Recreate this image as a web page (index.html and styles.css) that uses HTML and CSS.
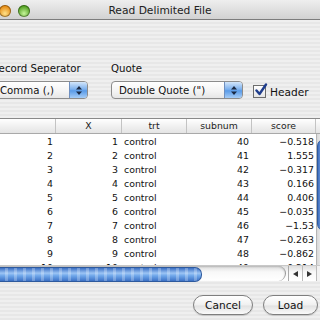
FILE: index.html
```html
<!DOCTYPE html>
<html lang="en">
<head>
    <meta charset="UTF-8">
    <title>Read Delimited File</title>
    <link rel="stylesheet" href="styles.css">
</head>
<body>
<div class="window">
    <div class="titlebar">
        <div class="lights">
            <span class="light close"></span>
            <span class="light minimize"></span>
            <span class="light zoom"></span>
        </div>
        <div class="title">Read Delimited File</div>
        <div></div>
    </div>

    <div class="content">
        <div class="options">
            <div class="field sep">
                <div class="label">Record Seperator</div>
                <div class="popup">
                    <span class="popup-text">Comma (,)</span>
                    <span class="arrows">
                        <svg width="8" height="11" viewBox="0 0 8 11"><path d="M4 1 L7 4.5 H1 Z M4 10 L7 6.5 H1 Z" fill="#1b2a44"/></svg>
                    </span>
                </div>
            </div>
            <div class="field quote">
                <div class="label">Quote</div>
                <div class="popup">
                    <span class="popup-text">Double Quote (")</span>
                    <span class="arrows">
                        <svg width="8" height="11" viewBox="0 0 8 11"><path d="M4 1 L7 4.5 H1 Z M4 10 L7 6.5 H1 Z" fill="#1b2a44"/></svg>
                    </span>
                </div>
            </div>
            <label class="check">
                <span class="box">
                    <svg width="15" height="15" viewBox="0 0 15 15"><path d="M3.5 7.5 L6.5 11 L13 1.5" fill="none" stroke="#1f3d8c" stroke-width="2.4" stroke-linecap="round" stroke-linejoin="round"/></svg>
                </span>
                Header
            </label>
        </div>

        <div class="table">
            <div class="thead">
                <div class="th"></div>
                <div class="th">X</div>
                <div class="th">trt</div>
                <div class="th">subnum</div>
                <div class="th">score</div>
                <div class="th corner"></div>
            </div>
            <div class="tbody-wrap">
                <div class="tbody">
                    <div class="tr"><span>1</span><span>1</span><span class="txt">control</span><span>40</span><span>&minus;0.518</span></div>
                    <div class="tr"><span>2</span><span>2</span><span class="txt">control</span><span>41</span><span>1.555</span></div>
                    <div class="tr"><span>3</span><span>3</span><span class="txt">control</span><span>42</span><span>&minus;0.317</span></div>
                    <div class="tr"><span>4</span><span>4</span><span class="txt">control</span><span>43</span><span>0.166</span></div>
                    <div class="tr"><span>5</span><span>5</span><span class="txt">control</span><span>44</span><span>0.406</span></div>
                    <div class="tr"><span>6</span><span>6</span><span class="txt">control</span><span>45</span><span>&minus;0.035</span></div>
                    <div class="tr"><span>7</span><span>7</span><span class="txt">control</span><span>46</span><span>&minus;1.53</span></div>
                    <div class="tr"><span>8</span><span>8</span><span class="txt">control</span><span>47</span><span>&minus;0.263</span></div>
                    <div class="tr"><span>9</span><span>9</span><span class="txt">control</span><span>48</span><span>&minus;0.862</span></div>
                    <div class="tr"><span>10</span><span>10</span><span class="txt">control</span><span>49</span><span>0.214</span></div>
                </div>
                <div class="vscroll"><div class="vthumb"></div></div>
            </div>
            <div class="hscroll">
                <div class="htrack"><div class="hthumb"></div></div>
                <div class="harrows">
                    <span class="harrow"><svg width="5" height="6" viewBox="0 0 5 6"><path d="M0 3 L5 0 V6 Z" fill="#333"/></svg></span>
                    <span class="harrow"><svg width="5" height="6" viewBox="0 0 5 6"><path d="M5 3 L0 0 V6 Z" fill="#333"/></svg></span>
                </div>
                <div class="hcorner"></div>
            </div>
        </div>

        <div class="buttons">
            <button class="btn cancel">Cancel</button>
            <button class="btn load">Load</button>
        </div>
    </div>
</div>
</body>
</html>
```

FILE: styles.css
```css
html, body { margin: 0; height: 100%; overflow: hidden; }
body {
    font-family: "DejaVu Sans", "Liberation Sans", sans-serif;
    color: #111;
    background: repeating-linear-gradient(#efefef 0 2px, #e7e7e7 2px 4px);
}

.window { width: 376px; margin-left: -28px; }

/* title bar */
.titlebar {
    height: 19px;
    display: grid;
    grid-template-columns: 1fr auto 1fr;
    align-items: center;
    background: linear-gradient(#eeeeee, #d2d2d2);
    border-bottom: 1px solid #7d7d7d;
}
.lights { display: flex; gap: 7px; padding-left: 8px; padding-top: 2px; }
.light {
    flex: none;
    width: 12px; height: 12px; border-radius: 50%;
    box-shadow: inset 0 0 0 1px rgba(0,0,0,0.35);
}
.close { background: radial-gradient(circle at 50% 70%, #ff9a8a, #d42a17 70%); }
.minimize { background: radial-gradient(circle at 50% 70%, #ffe28a, #e58a12 70%); }
.zoom { background: radial-gradient(circle at 50% 70%, #c6f59a, #4f9e1e 70%); }
.title { font-size: 10.7px; color: #222; padding-top: 1px; }

.content { padding: 43px 30px 0 20px; }

/* options row */
.options { display: flex; align-items: flex-end; height: 36px; }
.field { display: flex; flex-direction: column; gap: 5px; }
.label { font-size: 10.2px; line-height: 14px; }
.sep { width: 96px; }
.quote { width: 132px; margin-left: 23px; }
.popup {
    height: 16px;
    display: flex;
    align-items: center;
    border: 1px solid #8c8c8c;
    border-radius: 4px;
    background: linear-gradient(#ffffff, #f3f3f3 60%, #e6e6e6);
    font-size: 10.2px;
    overflow: hidden;
}
.popup-text { flex: 1; padding-left: 7px; }
.arrows {
    width: 17px; height: 16px;
    display: flex; align-items: center; justify-content: center;
    background: linear-gradient(#d3e6fb, #7db1ee 45%, #5a9be8 55%, #a6cdf7);
    border-left: 1px solid #6f8fbf;
}

.check {
    display: flex; align-items: center; gap: 4px;
    margin-left: 10px; margin-bottom: 1px;
    font-size: 10.6px;
}
.box {
    width: 11px; height: 11px;
    border: 1px solid #6c6c6c;
    background: linear-gradient(#ffffff, #e4e4e4);
    position: relative;
}
.box svg { position: absolute; left: -1px; top: -3px; }

/* table */
.table {
    margin: 19px 0 0 -20px;
    width: 361px;
    background: #fff;
    border-top: 1px solid #8a8a8a;
}
.thead {
    display: grid;
    grid-template-columns: 84px 66px 65px 65px 64px 16px;
    height: 14px;
    background: linear-gradient(#ffffff, #f1f1f1 50%, #e4e4e4);
    border-bottom: 1px solid #a9a9a9;
}
.th {
    font-size: 9.3px; line-height: 14px; text-align: center;
    border-right: 1px solid #c3c3c3;
    color: #222;
}
.th.corner { border-right: none; }

.tbody-wrap { display: flex; height: 131px; overflow: hidden; }
.tbody { width: 344px; }
.tr {
    display: grid;
    grid-template-columns: 84px 66px 65px 65px 64px;
    height: 14px;
    font-size: 9.4px; line-height: 15px;
}
.tr span { text-align: right; padding-right: 3px; }
.tr span:nth-child(2) { padding-right: 4px; }
.tr span:nth-child(5) { padding-right: 2px; }
.tr .txt { text-align: left; padding: 0 0 0 2px; }

.vscroll {
    width: 16px;
    background: linear-gradient(90deg, #d8d8d8, #f7f7f7 40%, #ffffff);
    border-left: 1px solid #b5b5b5;
    padding-top: 5px;
}
.vthumb {
    height: 90px;
    margin: 0 1px 0 0;
    border-radius: 7px;
    background: linear-gradient(90deg, #3f6fc0, #8fbaf0 45%, #6aa0e8 60%, #3a69b8);
    border: 1px solid #2e5a9e;
}

.hscroll {
    display: flex; height: 15px;
    border-top: 1px solid #c8c8c8;
    background: linear-gradient(#dedede, #f8f8f8 40%, #ffffff);
}
.htrack {
    flex: 1;
    margin-right: 2px;
    border-radius: 0 8px 8px 0;
    border-right: 1px solid #9a9a9a;
    box-shadow: inset 0 1px 2px rgba(0,0,0,0.2);
}
.hthumb {
    width: 229px; height: 13px;
    margin-top: 1px;
    border-radius: 0 7px 7px 0;
    border: 1px solid #2e5a9e;
    border-left: none;
    background:
        repeating-linear-gradient(90deg, rgba(255,255,255,0) 0 6px, rgba(255,255,255,0.25) 6px 9px),
        linear-gradient(#3a6fc4, #9cc4f4 40%, #6ea6ea 60%, #3d72c6);
}
.harrows { display: flex; border-left: 1px solid #aaa; }
.harrow {
    width: 13px;
    display: flex; align-items: center; justify-content: center;
    border-right: 1px solid #bbb;
}
.hcorner { width: 16px; background: #f2f2f2; }

/* buttons */
.buttons { display: flex; justify-content: flex-end; gap: 10px; margin-top: 14px; }
.btn {
    font-family: "DejaVu Sans", sans-serif;
    font-size: 10.6px; color: #111;
    height: 20px; padding: 0;
    border: 1px solid #7e7e7e;
    border-radius: 10px;
    background: linear-gradient(#ffffff, #f0f0f0 50%, #e2e2e2 55%, #fafafa);
    box-shadow: 0 1px 1px rgba(0,0,0,0.15);
}
.cancel { width: 60px; }
.load { width: 55px; }
```
